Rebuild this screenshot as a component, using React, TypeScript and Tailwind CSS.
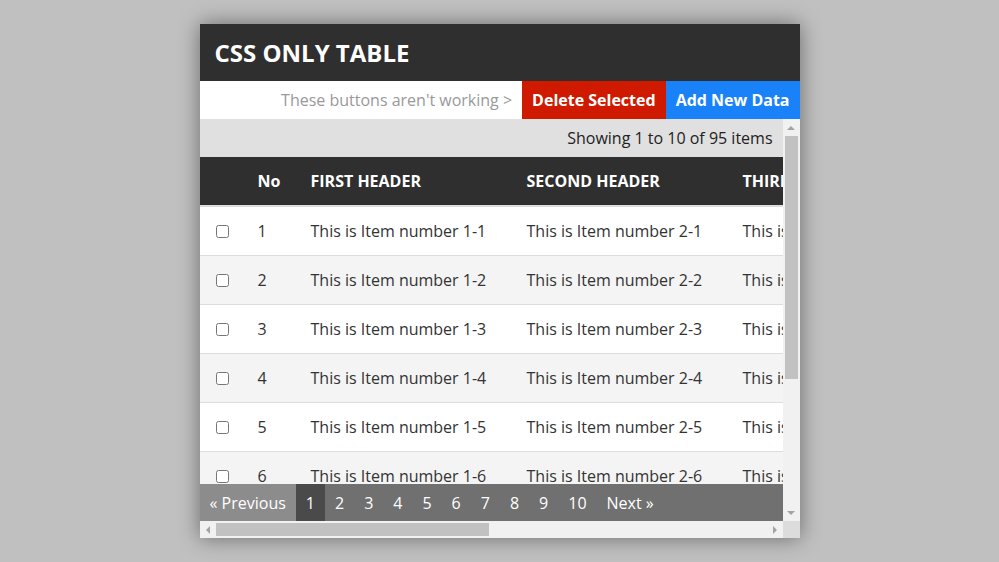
const headers = ['FIRST HEADER', 'SECOND HEADER', 'THIRD HEADER', 'FOURTH HEADER', 'FIFTH HEADER'];
const rows = Array.from({ length: 10 }, (_, i) => i + 1);
const pages = [1, 2, 3, 4, 5, 6, 7, 8, 9, 10];

function Arrow({ dir }: { dir: 'up' | 'down' | 'left' | 'right' }) {
  const pts = {
    up: '0,4 4,0 8,4',
    down: '0,0 8,0 4,4',
    left: '4,0 4,8 0,4',
    right: '0,0 0,8 4,4',
  }[dir];
  const vertical = dir === 'up' || dir === 'down';
  return (
    <svg width={vertical ? 8 : 4} height={vertical ? 4 : 8} viewBox={vertical ? '0 0 8 4' : '0 0 4 8'}>
      <polygon points={pts} fill="#a3a3a3" />
    </svg>
  );
}

export default function App() {
  return (
    <div
      className="flex h-screen w-full items-center justify-center bg-[#c0c0c0]"
      style={{ fontFamily: '"Open Sans", "Noto Sans", sans-serif' }}
    >
      <div className="w-[600px] shadow-[0_0_20px_rgba(0,0,0,0.45)]">
        <div className="flex h-[57px] items-center bg-[#2f2f2f] px-[15px]">
          <h1 className="text-[24px] font-bold text-white">CSS ONLY TABLE</h1>
        </div>
        <div className="flex h-[38px] items-stretch bg-white text-[16px]">
          <div className="flex flex-1 items-center justify-end pr-[10px] text-[#999]">
            These buttons aren't working &gt;
          </div>
          <button className="bg-[#d01a00] px-[10px] font-bold text-white">Delete Selected</button>
          <button className="bg-[#1a82f8] px-[10px] font-bold text-white">Add New Data</button>
        </div>
        <div className="flex h-[402px]">
          <div className="flex w-[583px] flex-col overflow-hidden bg-white">
            <div className="flex h-[38px] shrink-0 items-center justify-end bg-[#e0e0e0] pr-[10px] text-[16px] text-[#222]">
              Showing 1 to 10 of 95 items
            </div>
            <div className="min-h-0 flex-1 overflow-hidden">
              <div className="w-max text-[16px]">
                <div className="flex h-[48px] items-center bg-[#2f2f2f] font-bold text-white">
                  <div className="w-[58px]"></div>
                  <div className="w-[53px]">No</div>
                  {headers.map((h) => (
                    <div key={h} className="w-[216px] whitespace-nowrap">
                      {h}
                    </div>
                  ))}
                </div>
                <div className="h-[2px] bg-[#ddd]"></div>
                {rows.map((r) => (
                  <div
                    key={r}
                    className={`flex h-[49px] items-center border-b border-[#ddd] text-[#333] ${r % 2 === 0 ? 'bg-[#f4f4f4]' : 'bg-white'}`}
                  >
                    <div className="w-[58px] pl-[16px]">
                      <input type="checkbox" className="m-0 block h-[13px] w-[13px]" />
                    </div>
                    <div className="w-[53px]">{r}</div>
                    {headers.map((h, c) => (
                      <div key={h} className="w-[216px] whitespace-nowrap">
                        This is Item number {c + 1}-{r}
                      </div>
                    ))}
                  </div>
                ))}
              </div>
            </div>
            <div className="flex h-[37px] shrink-0 items-stretch bg-[#707070] text-[16px] text-white">
              <span className="flex items-center bg-[#8c8c8c] px-[10px]">« Previous</span>
              {pages.map((p) => (
                <span
                  key={p}
                  className={`flex items-center px-[10px] ${p === 1 ? 'bg-[#4a4a4a]' : ''}`}
                >
                  {p}
                </span>
              ))}
              <span className="flex items-center px-[10px]">Next »</span>
            </div>
          </div>
          <div className="flex w-[17px] flex-col items-center bg-[#f1f1f1]">
            <div className="flex h-[17px] items-center justify-center">
              <Arrow dir="up" />
            </div>
            <div className="w-full flex-1 px-[2px]">
              <div className="h-[243px] w-full bg-[#c1c1c1]"></div>
            </div>
            <div className="flex h-[17px] items-center justify-center">
              <Arrow dir="down" />
            </div>
          </div>
        </div>
        <div className="flex h-[17px]">
          <div className="flex w-[583px] items-center bg-[#f1f1f1]">
            <div className="flex w-[16px] justify-center">
              <Arrow dir="left" />
            </div>
            <div className="flex h-full flex-1 items-center">
              <div className="h-[13px] w-[273px] bg-[#c1c1c1]"></div>
            </div>
            <div className="flex w-[16px] justify-center">
              <Arrow dir="right" />
            </div>
          </div>
          <div className="w-[17px] bg-[#dcdcdc]"></div>
        </div>
      </div>
    </div>
  );
}
